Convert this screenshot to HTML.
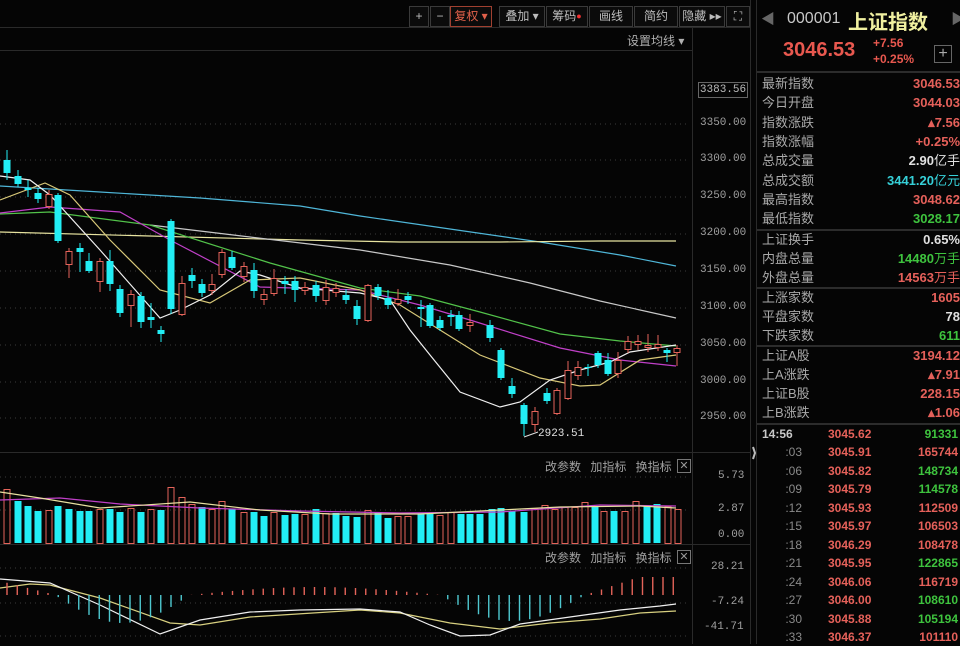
<!DOCTYPE html><html><head><meta charset="utf-8"><style>
*{margin:0;padding:0;box-sizing:border-box}
body{width:960px;height:644px;background:#050505;overflow:hidden;position:relative;font-family:"Liberation Sans","Noto Sans CJK SC",sans-serif;color:#b8b8b8}
.abs{position:absolute}
.tb{position:absolute;top:6px;height:21px;border:1px solid #3a3a3a;font-size:12px;line-height:19px;text-align:center;color:#bdbdbd;background:#0b0b0b}
.row{position:absolute;left:762px;width:198px;height:19px;font-size:13px;line-height:19px}
.row .l{position:absolute;left:0;color:#a9a9a9}
.row .r{position:absolute;right:0;font-weight:bold}
.t{position:absolute;left:762px;width:198px;height:18px;font-size:12px;line-height:18px;font-weight:bold}
.t .a{position:absolute;left:0;width:40px;text-align:right;color:#8a8a8a;font-weight:normal}
.t .b{position:absolute;left:66px;color:#e5615a}
.t .c{position:absolute;right:2px}
.red{color:#e5605a}.grn{color:#3ec33e}.cyn{color:#36d0d8}.wht{color:#e0e0e0}
.ax{position:absolute;left:700px;font-size:11px;color:#a0a0a0;font-family:"Liberation Mono",monospace}
.sep{position:absolute;left:757px;width:203px;height:2px;background:#2c2c2c}
</style></head><body>
<svg class="abs" style="left:0;top:0" width="960" height="644">
<g stroke="#2a2a2a" stroke-width="1">
<line x1="0" y1="27.5" x2="750" y2="27.5"/>
<line x1="0" y1="50.5" x2="692" y2="50.5"/>
<line x1="692.5" y1="27" x2="692.5" y2="644"/>
<line x1="750.5" y1="0" x2="750.5" y2="644"/>
<line x1="756.5" y1="0" x2="756.5" y2="644"/>
<line x1="0" y1="452.5" x2="750" y2="452.5"/>
<line x1="0" y1="544.5" x2="750" y2="544.5"/>
</g>
<g stroke="#3a3a3a" stroke-dasharray="1,4">
<line x1="0" y1="124" x2="690" y2="124"/><line x1="0" y1="160" x2="690" y2="160"/><line x1="0" y1="197" x2="690" y2="197"/><line x1="0" y1="234" x2="690" y2="234"/><line x1="0" y1="271" x2="690" y2="271"/><line x1="0" y1="308" x2="690" y2="308"/><line x1="0" y1="345" x2="690" y2="345"/><line x1="0" y1="382" x2="690" y2="382"/><line x1="0" y1="418" x2="690" y2="418"/>
<line x1="0" y1="477" x2="690" y2="477"/><line x1="0" y1="510" x2="690" y2="510"/>
<line x1="0" y1="568" x2="690" y2="568"/><line x1="0" y1="603" x2="690" y2="603"/><line x1="0" y1="636" x2="690" y2="636"/>
</g>
<path d="M753 447 L755 453 L753 459" stroke="#bbb" fill="none" stroke-width="2"/>
<!-- MAs -->
<g fill="none" stroke-width="1.2">
<polyline stroke="#4fb6d8" points="0,186 100,192 200,198 300,206 360,216 450,229 540,242 620,255 676,266"/>
<polyline stroke="#e8e4a0" points="0,232 150,236 300,240 400,242 500,242 600,241 676,241"/>
<polyline stroke="#c8c8c8" points="150,225 250,237 360,250 450,265 530,283 600,301 676,318"/>
<polyline stroke="#52c24a" points="0,214 50,212 150,225 270,263 360,288 420,296 480,312 560,334 620,341 676,346"/>
<polyline stroke="#c040c8" points="0,213 50,207 120,212 170,240 260,287 360,290 420,305 470,320 560,348 620,360 676,366"/>
<polyline stroke="#d8c878" points="0,200 45,183 70,195 110,240 160,290 210,303 250,280 300,278 360,290 400,305 440,330 480,355 540,378 580,386 600,385 640,360 676,355"/>
<polyline stroke="#f0f0f0" points="0,176 30,180 50,195 100,250 160,318 180,310 210,295 240,271 260,275 300,288 360,293 390,300 410,330 430,355 460,392 500,407 520,402 550,380 580,370 610,362 630,352 676,345"/>
</g>
<!-- candles -->
<g id="cd" stroke-width="1"></g>
<g stroke="#e0e0e0"><line x1="524" y1="437" x2="538" y2="432"/></g>
<text x="538" y="436" fill="#e0e0e0" font-size="11" font-family="Liberation Mono">2923.51</text>
<!-- MACD lines -->
<line x1="0" y1="595" x2="690" y2="595" stroke="#333" stroke-width="0"/>
<g fill="none" stroke-width="1.2">
<polyline stroke="#d8d080" points="0,588 30,584 50,585 100,598 170,623 200,625 250,617 360,610 400,613 450,623 500,629 550,623 600,619 640,613 676,611"/>
<polyline stroke="#f0f0f0" points="0,579 50,583 100,605 160,634 200,620 250,612 300,610 360,609 400,612 430,625 460,636 490,635 520,624 570,617 620,610 660,606 676,604"/>
</g>
<g id="mh" stroke-width="1.4"></g>
<g id="vb"></g>
</svg>
<script>
var C=[[18,176,184,170,187,'c'],[28,188,190,180,197,'c'],[38,193,199,188,203,'c'],[49,194,206,190,209,'r'],[58,195,241,193,243,'c'],[69,251,264,248,278,'r'],[80,248,252,243,272,'c'],[89,261,271,253,273,'c'],[100,261,281,258,292,'r'],[110,261,284,250,291,'c'],[120,289,313,285,317,'c'],[131,294,305,290,327,'r'],[141,296,322,292,328,'c'],[151,317,320,303,328,'c'],[161,330,334,326,342,'c'],[171,221,309,219,314,'c'],[182,283,314,276,316,'r'],[192,275,281,268,288,'c'],[202,284,293,279,297,'c'],[212,284,290,274,295,'r'],[222,252,274,249,278,'r'],[232,257,268,251,270,'c'],[244,266,276,262,282,'r'],[254,270,291,263,298,'c'],[264,294,299,289,305,'r'],[274,278,293,269,296,'r'],[285,281,284,276,294,'c'],[295,281,290,276,302,'c'],[305,287,290,282,295,'r'],[316,285,296,281,302,'c'],[326,287,300,280,305,'r'],[336,288,292,283,297,'r'],[346,295,300,289,304,'c'],[357,306,319,300,325,'c'],[368,285,320,284,322,'r'],[378,287,296,284,300,'c'],[388,298,305,290,309,'c'],[398,299,303,289,306,'r'],[408,296,300,292,304,'c'],[421,307,309,300,327,'c'],[430,305,326,303,328,'c'],[440,320,328,316,331,'c'],[451,315,317,310,326,'c'],[459,315,329,311,331,'c'],[470,322,325,314,332,'r'],[490,325,338,320,342,'c'],[501,350,378,348,380,'c'],[512,386,394,378,398,'c'],[524,405,424,403,436,'c'],[535,411,424,407,432,'r'],[547,393,401,388,404,'c'],[557,390,413,388,415,'r'],[568,370,398,361,400,'r'],[578,367,375,361,380,'r'],[588,367,368,364,376,'c'],[598,353,365,351,368,'c'],[608,360,374,353,376,'c'],[618,360,373,352,378,'r'],[628,341,349,336,353,'r'],[638,341,344,335,350,'r'],[648,345,347,334,352,'r'],[658,344,347,335,351,'r'],[667,350,353,348,362,'c'],[677,348,352,345,366,'r'],[7,160,173,150,180,'c']];
var s='';C.forEach(function(d){var col=d[5]=='c'?'#22eef5':'#e5645a';s+='<line x1="'+d[0]+'" x2="'+d[0]+'" y1="'+d[3]+'" y2="'+d[4]+'" stroke="'+col+'"/>';s+=d[5]=='c'?'<rect x="'+(d[0]-3.5)+'" y="'+d[1]+'" width="7" height="'+Math.max(1,d[2]-d[1])+'" fill="'+col+'"/>':'<rect x="'+(d[0]-3)+'" y="'+(d[1]+.5)+'" width="6" height="'+Math.max(1,d[2]-d[1])+'" fill="#050505" stroke="'+col+'"/>';});
document.getElementById('cd').innerHTML=s;
var V=[[7,489,'r'],[18,501,'c'],[28,506,'c'],[38,511,'c'],[49,510,'r'],[58,506,'c'],[69,509,'c'],[80,511,'c'],[89,511,'c'],[100,509,'r'],[110,509,'c'],[120,512,'c'],[131,508,'r'],[141,512,'c'],[151,509,'r'],[161,510,'c'],[171,487,'r'],[182,497,'r'],[192,504,'r'],[202,507,'c'],[212,509,'r'],[222,501,'r'],[232,509,'c'],[244,512,'r'],[254,512,'c'],[264,516,'c'],[274,512,'r'],[285,515,'c'],[295,514,'c'],[305,514,'r'],[316,509,'c'],[326,513,'r'],[336,513,'c'],[346,516,'c'],[357,517,'c'],[368,510,'r'],[378,513,'c'],[388,518,'c'],[398,516,'r'],[408,516,'r'],[421,513,'c'],[430,514,'c'],[440,515,'r'],[451,512,'r'],[461,514,'c'],[470,514,'c'],[480,514,'c'],[492,509,'c'],[501,508,'c'],[512,511,'c'],[524,512,'c'],[535,508,'r'],[545,505,'r'],[555,509,'r'],[565,507,'r'],[575,507,'r'],[585,502,'r'],[595,506,'c'],[604,511,'r'],[614,511,'c'],[625,511,'r'],[636,501,'r'],[647,505,'c'],[657,504,'c'],[668,506,'r'],[678,509,'r']];
s='';V.forEach(function(d){s+=d[2]=='c'?'<rect x="'+(d[0]-3.5)+'" y="'+d[1]+'" width="7" height="'+(543-d[1])+'" fill="#22eef5"/>':'<rect x="'+(d[0]-3)+'" y="'+(d[1]+.5)+'" width="6" height="'+(543-d[1])+'" fill="none" stroke="#e5645a"/>';});
s+='<polyline fill="none" stroke="#c040c8" stroke-width="1.2" points="0,500 60,498 120,504 200,508 300,511 400,513 500,512 600,505 676,506"/><polyline fill="none" stroke="#e8e0a0" stroke-width="1.2" points="0,492 40,498 100,508 190,502 260,510 330,514 420,514 500,510 560,507 640,506 676,508"/>';
document.getElementById('vb').innerHTML=s;
s='';for(var x=7;x<=677;x+=10.25){var h;if(x<55)h=-(14-(x/4));else if(x<190)h=Math.sin((x-55)/135*Math.PI)*28;else if(x<440)h=-Math.sin((x-190)/250*Math.PI)*8;else if(x<585)h=Math.sin((x-440)/145*Math.PI)*26;else h=-Math.min(18,(x-585)/3);if(x>440&&x<585)h=Math.sin((x-440)/145*Math.PI)*26;var col=h>0?'#4fc8d0':'#e5645a';s+='<line x1="'+x+'" x2="'+x+'" y1="595" y2="'+(595+h)+'" stroke="'+col+'"/>';}
document.getElementById('mh').innerHTML=s;
</script>
<!-- toolbar -->
<div class="tb" style="left:409px;width:20px">+</div>
<div class="tb" style="left:430px;width:20px">−</div>
<div class="tb" style="left:450px;width:42px;border-color:#a04030;color:#e0604a">复权 ▾</div>
<div class="tb" style="left:499px;width:46px">叠加 ▾</div>
<div class="tb" style="left:546px;width:42px">筹码<span style="color:#f03030;font-size:9px;vertical-align:top">●</span></div>
<div class="tb" style="left:589px;width:44px">画线</div>
<div class="tb" style="left:634px;width:44px">简约</div>
<div class="tb" style="left:679px;width:46px">隐藏 ▸▸</div>
<div class="tb" style="left:726px;width:24px">⛶</div>
<div class="abs" style="left:627px;top:32px;font-size:12px;color:#b0b0b0">设置均线 ▾</div>
<div class="abs" style="left:698px;top:82px;width:50px;height:16px;border:1px solid #666;font-size:11px;line-height:14px;text-align:center;color:#bbb;font-family:'Liberation Mono',monospace">3383.56</div>
<div class="ax" style="top:117px">3350.00</div><div class="ax" style="top:153px">3300.00</div><div class="ax" style="top:190px">3250.00</div><div class="ax" style="top:227px">3200.00</div><div class="ax" style="top:264px">3150.00</div><div class="ax" style="top:301px">3100.00</div><div class="ax" style="top:338px">3050.00</div><div class="ax" style="top:375px">3000.00</div><div class="ax" style="top:411px">2950.00</div>
<div class="ax" style="top:470px;left:718px">5.73</div><div class="ax" style="top:503px;left:718px">2.87</div><div class="ax" style="top:529px;left:718px">0.00</div>
<div class="ax" style="top:561px;left:711px">28.21</div><div class="ax" style="top:596px;left:711px">-7.24</div><div class="ax" style="top:621px;left:704px">-41.71</div>
<div class="abs" style="left:545px;top:458px;font-size:12px;color:#a0a0a0;word-spacing:6px">改参数 加指标 换指标</div>
<div class="abs" style="left:677px;top:459px;width:14px;height:14px;border:1px solid #777;font-size:11px;line-height:12px;text-align:center;color:#999">✕</div>
<div class="abs" style="left:545px;top:549px;font-size:12px;color:#a0a0a0;word-spacing:6px">改参数 加指标 换指标</div>
<div class="abs" style="left:677px;top:550px;width:14px;height:14px;border:1px solid #777;font-size:11px;line-height:12px;text-align:center;color:#999">✕</div>
<!-- right panel -->
<div class="abs" style="left:761px;top:9px;font-size:14px;color:#666">◀</div>
<div class="abs" style="left:787px;top:10px;font-size:16px;color:#c8c8c8">000001</div>
<div class="abs" style="left:848px;top:6px;font-size:20px;color:#f0f0a0;font-weight:bold">上证指数</div>
<div class="abs" style="left:951px;top:9px;font-size:14px;color:#666">▶</div>
<div class="abs" style="left:783px;top:39px;font-size:20px;color:#e8584f;font-weight:bold">3046.53</div>
<div class="abs" style="left:873px;top:35px;font-size:12px;color:#e8584f;font-weight:bold;line-height:16px">+7.56<br>+0.25%</div>
<div class="abs" style="left:934px;top:45px;width:18px;height:18px;border:1px solid #666;color:#aaa;font-size:16px;line-height:15px;text-align:center">+</div>
<div class="sep" style="top:71px"></div>
<div class="row" style="top:74px"><span class="l">最新指数</span><span class="r red">3046.53</span></div>
<div class="row" style="top:93px"><span class="l">今日开盘</span><span class="r red">3044.03</span></div>
<div class="row" style="top:113px"><span class="l">指数涨跌</span><span class="r red">▴7.56</span></div>
<div class="row" style="top:132px"><span class="l">指数涨幅</span><span class="r red">+0.25%</span></div>
<div class="row" style="top:151px"><span class="l">总成交量</span><span class="r wht">2.90<span style="font-weight:normal">亿手</span></span></div>
<div class="row" style="top:171px"><span class="l">总成交额</span><span class="r cyn">3441.20<span style="font-weight:normal">亿元</span></span></div>
<div class="row" style="top:190px"><span class="l">最高指数</span><span class="r red">3048.62</span></div>
<div class="row" style="top:209px"><span class="l">最低指数</span><span class="r grn">3028.17</span></div>
<div class="sep" style="top:229px"></div>
<div class="row" style="top:230px"><span class="l">上证换手</span><span class="r wht">0.65%</span></div>
<div class="row" style="top:249px"><span class="l">内盘总量</span><span class="r grn">14480<span style="font-weight:normal">万手</span></span></div>
<div class="row" style="top:268px"><span class="l">外盘总量</span><span class="r red">14563<span style="font-weight:normal">万手</span></span></div>
<div class="sep" style="top:287px"></div>
<div class="row" style="top:288px"><span class="l">上涨家数</span><span class="r red">1605</span></div>
<div class="row" style="top:307px"><span class="l">平盘家数</span><span class="r wht">78</span></div>
<div class="row" style="top:326px"><span class="l">下跌家数</span><span class="r grn">611</span></div>
<div class="sep" style="top:345px"></div>
<div class="row" style="top:346px"><span class="l">上证A股</span><span class="r red">3194.12</span></div>
<div class="row" style="top:365px"><span class="l">上A涨跌</span><span class="r red">▴7.91</span></div>
<div class="row" style="top:384px"><span class="l">上证B股</span><span class="r red">228.15</span></div>
<div class="row" style="top:403px"><span class="l">上B涨跌</span><span class="r red">▴1.06</span></div>
<div class="sep" style="top:423px"></div>
<div class="t" style="top:425px"><span class="a" style="color:#c8c8c8;font-weight:bold;left:0;width:auto">14:56</span><span class="b">3045.62</span><span class="c grn">91331</span></div>
<div class="t" style="top:443px"><span class="a">:03</span><span class="b">3045.91</span><span class="c red">165744</span></div>
<div class="t" style="top:462px"><span class="a">:06</span><span class="b">3045.82</span><span class="c grn">148734</span></div>
<div class="t" style="top:480px"><span class="a">:09</span><span class="b">3045.79</span><span class="c grn">114578</span></div>
<div class="t" style="top:499px"><span class="a">:12</span><span class="b">3045.93</span><span class="c red">112509</span></div>
<div class="t" style="top:517px"><span class="a">:15</span><span class="b">3045.97</span><span class="c red">106503</span></div>
<div class="t" style="top:536px"><span class="a">:18</span><span class="b">3046.29</span><span class="c red">108478</span></div>
<div class="t" style="top:554px"><span class="a">:21</span><span class="b">3045.95</span><span class="c grn">122865</span></div>
<div class="t" style="top:573px"><span class="a">:24</span><span class="b">3046.06</span><span class="c red">116719</span></div>
<div class="t" style="top:591px"><span class="a">:27</span><span class="b">3046.00</span><span class="c grn">108610</span></div>
<div class="t" style="top:610px"><span class="a">:30</span><span class="b">3045.88</span><span class="c grn">105194</span></div>
<div class="t" style="top:628px"><span class="a">:33</span><span class="b">3046.37</span><span class="c red">101110</span></div>
</body></html>
